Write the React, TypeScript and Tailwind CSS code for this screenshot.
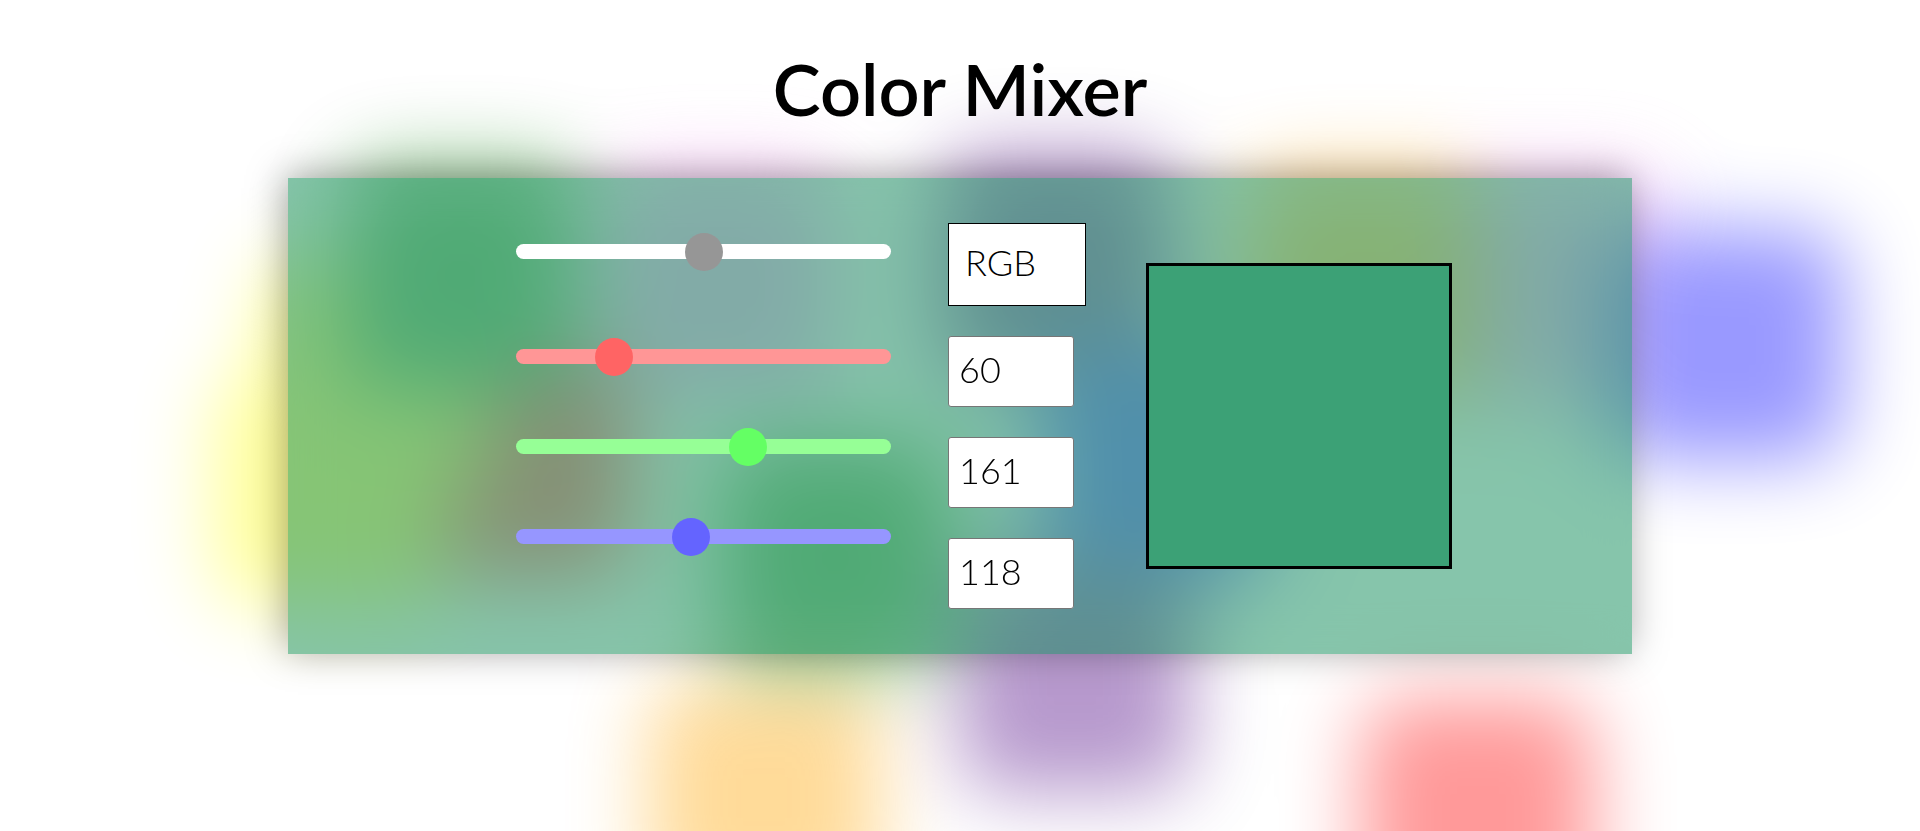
import { useState } from "react";

// later blobs are painted over earlier ones
const blobs = [
  { color: "red", left: "26.8%", top: "55.5%" },
  { color: "yellow", left: "19.6%", top: "45%" },
  { color: "yellow", left: "17.2%", top: "59%" },
  { color: "violet", left: "37.5%", top: "34%" },
  { color: "green", left: "24%", top: "33%" },
  { color: "orange", left: "39.8%", top: "96%" },
  { color: "green", left: "43.5%", top: "67%" },
  { color: "indigo", left: "55%", top: "32%" },
  { color: "indigo", left: "56%", top: "81.5%" },
  { color: "blue", left: "60.2%", top: "55.4%" },
  { color: "violet", left: "80.6%", top: "34.5%" },
  { color: "orange", left: "70.8%", top: "34%" },
  { color: "blue", left: "90%", top: "41.5%" },
  { color: "red", left: "77%", top: "98%" },
];

const sliderBase =
  "block h-[15px] w-full appearance-none rounded-full cursor-pointer [&::-webkit-slider-thumb]:appearance-none [&::-webkit-slider-thumb]:h-[38px] [&::-webkit-slider-thumb]:w-[38px] [&::-webkit-slider-thumb]:rounded-full";

function Slider({ label, value, max, onChange, className }: {
  label: string; value: number; max: number; onChange: (v: number) => void; className: string;
}) {
  return (
    <input
      type="range"
      aria-label={label}
      min={0}
      max={max}
      value={value}
      onChange={e => onChange(Number(e.target.value))}
      className={`${sliderBase} ${className}`}
    />
  );
}

function ChannelInput({ label, value, onChange }: {
  label: string; value: number; onChange: (v: number) => void;
}) {
  return (
    <input
      type="text"
      inputMode="numeric"
      aria-label={label}
      value={value}
      onChange={e => onChange(Math.min(255, Number(e.target.value) || 0))}
      className="h-[71px] w-[126px] rounded-[3px] border border-[#767676] bg-white px-2.5 pb-1.5 text-4xl font-light text-black"
    />
  );
}

export default function App() {
  const [light, setLight] = useState(50);
  const [red, setRed] = useState(60);
  const [green, setGreen] = useState(161);
  const [blue, setBlue] = useState(118);
  const [mode, setMode] = useState("RGB");

  return (
    <div className="relative isolate min-h-screen overflow-hidden bg-white font-['Lato','Open_Sans',sans-serif] text-black">
      {/* Background blobs */}
      <div className="absolute inset-0 -z-10 opacity-40 blur-[40px]" aria-hidden="true">
        {blobs.map((b, i) => (
          <div
            key={i}
            className="absolute size-[232px] -translate-x-1/2 -translate-y-1/2 rounded-[40px]"
            style={{ background: b.color, left: b.left, top: b.top }}
          />
        ))}
      </div>

      <h1 className="pt-10 text-center text-[72px] leading-[96px] font-semibold">Color Mixer</h1>

      {/* Mixer panel */}
      <main className="mx-auto mt-[42px] flex w-[70%] justify-center bg-[rgba(0,133,78,0.475)] py-[45px] pl-12 shadow-[-3px_-3px_36px_rgba(0,0,0,0.35)] backdrop-blur-[20px]">
        <div className="mr-[57px] flex w-[375px] flex-col pt-[21px]">
          <Slider label="Lightness" value={light} max={100} onChange={setLight} className="mb-[90px] bg-white [&::-webkit-slider-thumb]:bg-[#969696]" />
          <Slider label="Red" value={red} max={255} onChange={setRed} className="mb-[75px] bg-[#ff9696] [&::-webkit-slider-thumb]:bg-[#ff6464]" />
          <Slider label="Green" value={green} max={255} onChange={setGreen} className="mb-[75px] bg-[#96ff96] [&::-webkit-slider-thumb]:bg-[#64ff64]" />
          <Slider label="Blue" value={blue} max={255} onChange={setBlue} className="bg-[#9696ff] [&::-webkit-slider-thumb]:bg-[#6464ff]" />
        </div>

        <div className="mr-[60px] flex flex-col gap-[30px]">
          <select
            aria-label="Color format"
            value={mode}
            onChange={e => setMode(e.target.value)}
            className="h-[83px] w-[138px] appearance-none border border-black bg-white px-4 pb-1.5 text-4xl font-light text-black"
          >
            <option>RGB</option>
            <option>HEX</option>
          </select>
          <ChannelInput label="Red value" value={red} onChange={setRed} />
          <ChannelInput label="Green value" value={green} onChange={setGreen} />
          <ChannelInput label="Blue value" value={blue} onChange={setBlue} />
        </div>

        <div
          className="size-[306px] self-center border-[3px] border-black"
          style={{ background: `rgb(${red}, ${green}, ${blue})` }}
        />
      </main>
    </div>
  );
}
